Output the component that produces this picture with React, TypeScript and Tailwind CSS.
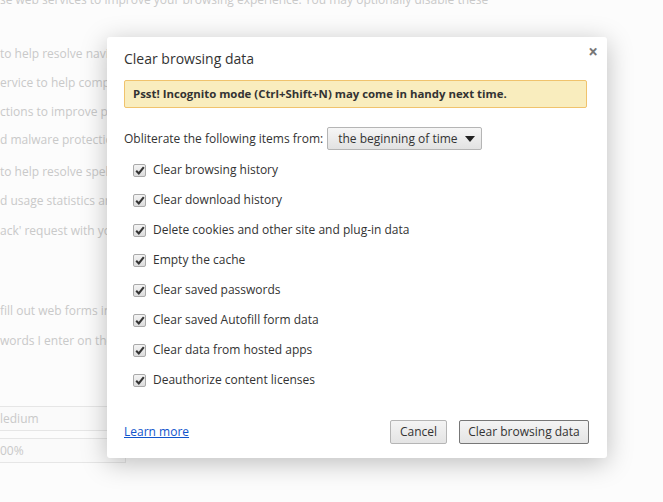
import React from "react";

// faded settings page behind the dialog
const bgLines = [
  { text: "to help resolve navigation errors", top: "mt-[34px]" },
  { text: "ervice to help complete searches and URLs typed in the address bar", top: "mt-[9px]" },
  { text: "ctions to improve page load performance", top: "mt-[9px]" },
  { text: "d malware protection", top: "mt-[8px]" },
  { text: "to help resolve spelling errors", top: "mt-[12px]" },
  { text: "d usage statistics and crash reports to Google", top: "mt-[9px]" },
  { text: "ack' request with your browsing traffic", top: "mt-[10px]" },
  { text: "fill out web forms in a single click", top: "mt-[60px]" },
  { text: "words I enter on the web", top: "mt-[10px]" },
];

const items = [
  "Clear browsing history",
  "Clear download history",
  "Delete cookies and other site and plug-in data",
  "Empty the cache",
  "Clear saved passwords",
  "Clear saved Autofill form data",
  "Clear data from hosted apps",
  "Deauthorize content licenses",
];

const Checkbox = () => (
  <span className="flex h-[13px] w-[13px] items-center justify-center rounded-[2px] border border-[#a9a9a9] bg-gradient-to-b from-[#f4f4f4] to-[#dcdcdc]">
    <svg width="10" height="9" viewBox="0 0 10 9">
      <path d="M1.2 4.8 L3.8 7.4 L8.8 1.2" fill="none" stroke="#333" strokeWidth="2.1" />
    </svg>
  </span>
);

export default function App() {
  return (
    <div
      className="relative h-[502px] w-[663px] overflow-hidden bg-[#fcfcfc] text-[12px] text-[#c9c9c9]"
      style={{ fontFamily: '"Open Sans", "Noto Sans", sans-serif' }}
    >
      {/* background page */}
      <div className="flex flex-col">
        <div className="-mt-[10px] h-[20px] leading-[20px] whitespace-nowrap">
          se web services to improve your browsing experience. You may optionally disable these
        </div>
        {bgLines.map((l, i) => (
          <div key={i} className={`${l.top} h-[20px] w-[107px] overflow-hidden leading-[20px] whitespace-nowrap`}>
            {l.text}
          </div>
        ))}
        <div className="mt-[55px] flex h-[25px] w-[126px] items-center border-y border-r border-[#e6e6e6] bg-[#fafafa]">
          ledium
        </div>
        <div className="mt-[7px] flex h-[25px] w-[126px] items-center border-y border-r border-[#e6e6e6] bg-[#fafafa]">
          00%
        </div>
      </div>

      {/* dialog */}
      <div className="absolute left-[107px] top-[37px] flex h-[421px] w-[500px] flex-col rounded-[3px] bg-white pl-[17px] pr-[20px] pt-[12px] text-[#333] shadow-[0_5px_26px_rgba(0,0,0,0.25)]">
        <button className="absolute right-[9px] top-[6px] text-[17px] font-bold leading-none text-[#777]">
          ×
        </button>
        <div className="h-[20px] text-[14px] leading-[20px]">Clear browsing data</div>
        <div className="mt-[11px] flex h-[28px] items-center whitespace-nowrap rounded-[2px] border border-[#f0c36d] bg-[#f9edbe] pl-[8px] text-[11.4px] font-bold">
          Psst! Incognito mode (Ctrl+Shift+N) may come in handy next time.
        </div>
        <div className="mt-[19px] flex h-[23px] items-center whitespace-nowrap">
          <span>Obliterate the following items from:</span>
          <div className="ml-[4px] flex h-[23px] w-[155px] items-center justify-between rounded-[2px] border border-[#b5b5b5] bg-gradient-to-b from-[#f6f6f6] to-[#e2e2e2] pl-[10px] pr-[6px]">
            <span>the beginning of time</span>
            <svg width="10" height="6" viewBox="0 0 10 6">
              <path d="M0 0 H10 L5 6 Z" fill="#222" />
            </svg>
          </div>
        </div>
        <div className="mt-[5px] flex flex-col pl-[9px]">
          {items.map((t) => (
            <label key={t} className="flex h-[30px] items-center gap-[7px]">
              <Checkbox />
              <span>{t}</span>
            </label>
          ))}
        </div>
        <div className="mt-[25px] flex items-center justify-between">
          <a href="#" className="text-[#15c] underline">
            Learn more
          </a>
          <div className="mr-[-2px] flex gap-[12px]">
            <button className="h-[24px] w-[57px] rounded-[2px] border border-[#b5b5b5] bg-gradient-to-b from-[#f4f4f4] to-[#e4e4e4] text-[#333]">
              Cancel
            </button>
            <button className="h-[24px] w-[130px] rounded-[2px] border border-[#777] bg-gradient-to-b from-[#f4f4f4] to-[#e4e4e4] text-[#333]">
              Clear browsing data
            </button>
          </div>
        </div>
      </div>
    </div>
  );
}
